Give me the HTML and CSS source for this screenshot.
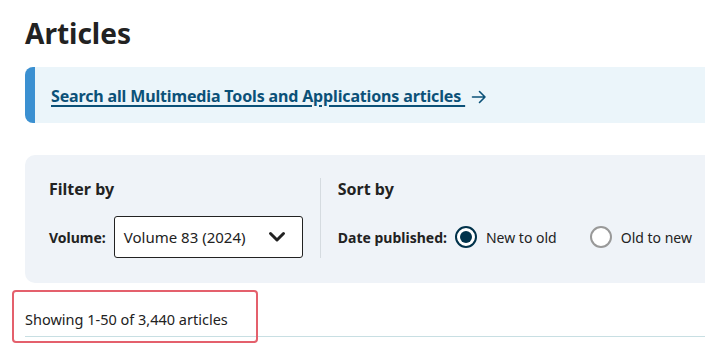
FILE: index.html
```html
<!DOCTYPE html>
<html lang="en">
<head>
    <meta charset="UTF-8">
    <meta name="viewport" content="width=device-width, initial-scale=1.0">
    <title>Articles</title>
    <link rel="stylesheet" href="styles.css">
</head>
<body>
    <main class="page">
        <h1 class="title">Articles</h1>

        <div class="search-banner">
            <a href="#" class="search-link"><span class="search-text">Search all Multimedia Tools and Applications articles&nbsp;</span>
                <svg class="arrow" width="16" height="16" viewBox="0 0 16 16" fill="none" stroke="currentColor" stroke-width="1.6" stroke-linecap="round" stroke-linejoin="round">
                    <path d="M1.5 8h12.5M8.5 2.5 14 8l-5.5 5.5"/>
                </svg>
            </a>
        </div>

        <div class="filters">
            <div class="filter-group">
                <h2 class="group-title">Filter by</h2>
                <div class="group-row">
                    <label class="field-label" for="volume">Volume:</label>
                    <div class="select" id="volume">
                        <span>Volume 83 (2024)</span>
                        <svg class="chevron" width="18" height="12" viewBox="0 0 18 12" fill="none" stroke="#222" stroke-width="3" stroke-linecap="round" stroke-linejoin="round">
                            <path d="M2.5 2.5 9 9l6.5-6.5"/>
                        </svg>
                    </div>
                </div>
            </div>
            <div class="divider"></div>
            <div class="filter-group">
                <h2 class="group-title">Sort by</h2>
                <div class="group-row">
                    <span class="field-label">Date published:</span>
                    <label class="radio"><span class="radio-dot checked"></span>New to old</label>
                    <label class="radio"><span class="radio-dot"></span>Old to new</label>
                </div>
            </div>
        </div>

        <div class="results">
            <p class="count">Showing 1-50 of 3,440 articles</p>
            <div class="highlight"></div>
        </div>
    </main>
</body>
</html>
```

FILE: styles.css
```css
html, body {
    height: 355px;
}

body {
    margin: 0;
    font-family: "Noto Sans", "Open Sans", sans-serif;
    color: #222;
    background: #fff;
    overflow: hidden;
}

.page {
    padding: 13px 0 0 25px;
}

.title {
    font-size: 28px;
    font-weight: 700;
    line-height: 40px;
    margin: 0 0 14px;
    color: #222;
}

.search-banner {
    background: #ebf5fa;
    border-left: 10px solid #3b90d1;
    border-radius: 8px 0 0 8px;
    height: 56px;
    display: flex;
    align-items: center;
    padding-left: 16px;
}

.search-link {
    color: #0b5178;
    font-weight: 700;
    font-size: 16px;
    text-decoration: none;
    display: flex;
    align-items: center;
    gap: 6px;
    padding-top: 2px;
    white-space: nowrap;
}

.search-text {
    letter-spacing: -0.15px;
    text-decoration: underline;
    text-underline-offset: 3px;
    text-decoration-thickness: 1.5px;
}

.arrow {
    margin-top: 2px;
}

.filters {
    margin-top: 32px;
    background: #eff3f8;
    border-radius: 10px 0 0 10px;
    height: 128px;
    padding: 23px 0 0 24px;
    box-sizing: border-box;
    display: flex;
    align-items: flex-start;
    overflow: hidden;
}

.filter-group {
    flex-shrink: 0;
    white-space: nowrap;
}

.group-title {
    font-size: 16px;
    font-weight: 700;
    line-height: 22px;
    margin: 0 0 16px;
}

.group-row {
    display: flex;
    align-items: center;
    height: 42px;
}

.field-label {
    font-size: 14px;
    font-weight: 700;
    margin-right: 8px;
}

.select {
    width: 189px;
    height: 42px;
    box-sizing: border-box;
    border: 1px solid #222;
    border-radius: 3px;
    background: #fff;
    display: flex;
    align-items: center;
    justify-content: space-between;
    padding: 0 16px 0 9px;
    font-size: 15px;
}

.divider {
    flex-shrink: 0;
    width: 1px;
    height: 80px;
    background: #d5dbe0;
    margin: 0 17px;
}

.radio {
    display: flex;
    align-items: center;
    font-size: 14px;
    margin-right: 33px;
}

.radio-dot {
    flex-shrink: 0;
    width: 22px;
    height: 22px;
    border-radius: 50%;
    border: 2px solid #999;
    box-sizing: border-box;
    background: #fff;
    margin-right: 9px;
    position: relative;
}

.radio-dot.checked {
    border-color: #01324b;
}

.radio-dot.checked::after {
    content: "";
    position: absolute;
    left: 3px;
    top: 3px;
    width: 12px;
    height: 12px;
    border-radius: 50%;
    background: #01324b;
}

.results {
    position: relative;
    margin-top: 26px;
    border-bottom: 1px solid #c8dfe3;
    padding-bottom: 7px;
}

.count {
    margin: 0;
    font-size: 14.5px;
    line-height: 20px;
    color: #222;
}

.highlight {
    position: absolute;
    left: -13px;
    top: -19px;
    width: 246px;
    height: 53px;
    border: 2px solid #e4606c;
    border-radius: 4px;
    box-sizing: border-box;
}
```
